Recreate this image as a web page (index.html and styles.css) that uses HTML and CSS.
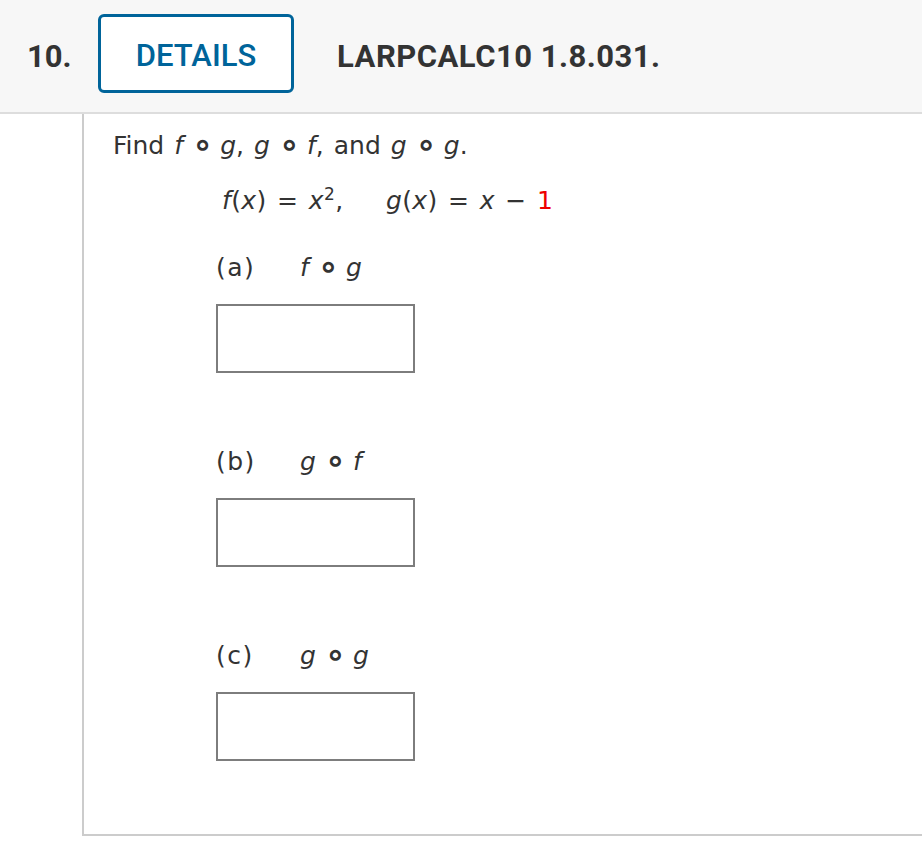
FILE: index.html
```html
<!DOCTYPE html>
<html>
<head>
<meta charset="utf-8">
<link rel="stylesheet" href="styles.css">
</head>
<body>
<div class="header">
  <span class="num">10.</span>
  <button class="details">DETAILS</button>
  <span class="title">LARPCALC10 1.8.031.</span>
</div>
<div class="content">
  <p class="prompt">Find <i>f</i> <span class="ring">∘</span> <i>g</i>, <i>g</i> <span class="ring">∘</span> <i>f</i>, and <i>g</i> <span class="ring">∘</span> <i>g</i>.</p>
  <p class="eq"><i>f</i>(<i>x</i>) = <i>x</i><sup>2</sup>, <span class="sp"></span><i>g</i>(<i>x</i>) = <i>x</i> − <span class="red">1</span></p>
  <div class="part first">
    <div class="label"><span class="letter">(a)</span><span class="expr"><i>f</i> <span class="ring">∘</span> <i>g</i></span></div>
    <div class="answer"></div>
  </div>
  <div class="part">
    <div class="label"><span class="letter">(b)</span><span class="expr"><i>g</i> <span class="ring">∘</span> <i>f</i></span></div>
    <div class="answer"></div>
  </div>
  <div class="part">
    <div class="label"><span class="letter">(c)</span><span class="expr"><i>g</i> <span class="ring">∘</span> <i>g</i></span></div>
    <div class="answer"></div>
  </div>
</div>
</body>
</html>
```
FILE: styles.css
```css
html, body {
  margin: 0;
  padding: 0;
  background: #ffffff;
}
.header {
  height: 112px;
  background: #f7f7f7;
  border-bottom: 2px solid #dddddd;
  display: flex;
  align-items: center;
  padding-left: 27px;
  font-family: Roboto, "Liberation Sans", sans-serif;
  color: #333333;
}
.num {
  font-size: 31px;
  font-weight: 700;
  width: 71px;
}
.details {
  box-sizing: border-box;
  width: 196px;
  height: 79px;
  margin-top: -5px;
  border: 3px solid #00649a;
  border-radius: 6px;
  background: #ffffff;
  color: #00649a;
  font-family: Roboto, "Liberation Sans", sans-serif;
  font-size: 31px;
  font-weight: 500;
  padding: 4px 0 0 0;
}
.title {
  font-size: 31px;
  font-weight: 700;
  letter-spacing: 0.5px;
  margin-left: 43px;
}
.content {
  margin-left: 82px;
  border-left: 2px solid #cccccc;
  border-bottom: 2px solid #cccccc;
  height: 722px;
  box-sizing: border-box;
  padding-left: 29px;
  padding-top: 14px;
  display: flex;
  flex-direction: column;
  font-family: "DejaVu Sans", Verdana, "Bitstream Vera Sans", sans-serif;
  font-size: 25px;
  word-spacing: 2px;
  color: #333333;
}
.content p {
  margin: 0;
}
.prompt {
  line-height: 36px;
}
.ring {
  display: inline-block;
  font-size: 34px;
  font-weight: 700;
  font-style: normal;
  line-height: 0;
  vertical-align: -2px;
  margin: 0 -3px 0 -1px;
}
.eq {
  margin-top: 19px !important;
  padding-left: 109px;
  line-height: 36px;
  letter-spacing: 0.4px;
}
.eq sup {
  font-size: 17px;
  line-height: 0;
}
.sp {
  display: inline-block;
  width: 32px;
}
.red {
  color: #ee0000;
}
.part {
  padding-left: 103px;
  display: flex;
  flex-direction: column;
  margin-top: 71px;
}
.part.first {
  margin-top: 31px;
}
.label {
  display: flex;
  line-height: 36px;
}
.letter {
  width: 84px;
  letter-spacing: 1.5px;
}
.answer {
  width: 199px;
  height: 69px;
  box-sizing: border-box;
  border: 2px solid #7d7d7d;
  margin-top: 18px;
}
```
